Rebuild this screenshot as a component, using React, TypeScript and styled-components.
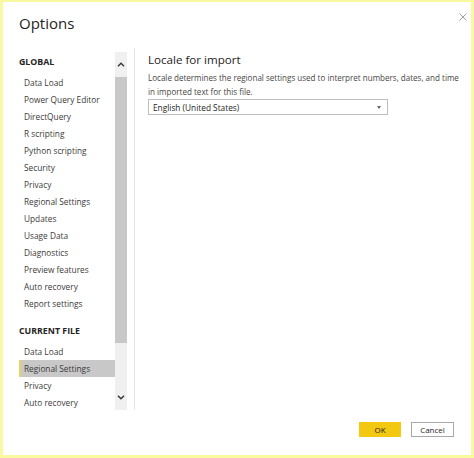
import * as React from "react"
import styled, { createGlobalStyle } from "styled-components"

const FONT = `"Open Sans", "Noto Sans", sans-serif`

const Global = createGlobalStyle`
body {
  margin: 0;
  background: #ffffff;
  font-family: ${FONT};
}
`

const Frame = styled.div`
width: 474px;
height: 458px;
box-sizing: border-box;
border: 3px solid #fbf9a0;
border-top-width: 2px;
background: #ffffff;
display: flex;
flex-direction: column;
`

const Header = styled.div`
height: 46px;
display: flex;
justify-content: space-between;
align-items: flex-start;
padding: 0 3px 0 16px;
box-sizing: border-box;
`

const Title = styled.h1`
margin: 10px 0 0 0;
font-size: 15px;
font-weight: 500;
color: #252423;
line-height: 22px;
`

const Close = styled.div`
margin-top: 3px;
width: 10px;
height: 10px;
`

const Main = styled.div`
height: 362px;
display: flex;
`

const Sidebar = styled.div`
display: flex;
padding: 4px 0 0 16px;
`

const Nav = styled.div`
width: 96px;
display: flex;
flex-direction: column;
`

const Heading = styled.div<{ $top?: number }>`
height: 20px;
line-height: 20px;
margin-top: ${p => p.$top ?? 0}px;
margin-bottom: 2px;
font-size: 8.8px;
font-weight: 700;
color: #252423;
`

const Item = styled.div<{ $active?: boolean }>`
height: 17px;
line-height: 17px;
padding-left: ${p => (p.$active ? 3 : 5)}px;
font-size: 8.3px;
color: #3b3a39;
white-space: nowrap;
background: ${p => (p.$active ? "#c8c8c8" : "transparent")};
border-left: ${p => (p.$active ? "2px solid #e8d35a" : "none")};
`

const Scroll = styled.div`
width: 12px;
height: 358px;
background: #f0f0f0;
display: flex;
flex-direction: column;
`

const Arrow = styled.div`
height: 25px;
display: flex;
align-items: center;
justify-content: center;
`

const Thumb = styled.div`
height: 266px;
background: #c8c8c8;
`

const Separator = styled.div`
width: 1px;
margin-left: 7px;
background: #e6e6e6;
`

const Content = styled.div`
flex: 1;
padding: 3px 0 0 13px;
`

const SectionTitle = styled.div`
font-size: 11.6px;
color: #252423;
line-height: 18px;
`

const Text = styled.div`
margin-top: 2px;
font-size: 8.05px;
white-space: nowrap;
color: #484644;
line-height: 14px;
`

const Select = styled.div`
width: 240px;
height: 16px;
box-sizing: border-box;
border: 1px solid #bdbdbd;
display: flex;
align-items: center;
justify-content: space-between;
padding: 0 6px 0 4px;
font-size: 8.3px;
color: #252423;
`

const Caret = styled.span`
width: 0;
height: 0;
border-left: 2px solid transparent;
border-right: 2px solid transparent;
border-top: 3px solid #666;
`

const Footer = styled.div`
flex: 1;
display: flex;
justify-content: flex-end;
align-items: flex-start;
gap: 10px;
padding: 12px 17px 0 0;
`

const Button = styled.button<{ $primary?: boolean }>`
width: ${p => (p.$primary ? 42 : 43)}px;
height: 15px;
padding: 0;
box-sizing: border-box;
font-family: ${FONT};
font-size: 8px;
color: #252423;
background: ${p => (p.$primary ? "#f2c811" : "#ffffff")};
border: 1px solid ${p => (p.$primary ? "#f2c811" : "#a8a8a8")};
`

const globalItems = [
  "Data Load",
  "Power Query Editor",
  "DirectQuery",
  "R scripting",
  "Python scripting",
  "Security",
  "Privacy",
  "Regional Settings",
  "Updates",
  "Usage Data",
  "Diagnostics",
  "Preview features",
  "Auto recovery",
  "Report settings",
]

const fileItems = ["Data Load", "Regional Settings", "Privacy", "Auto recovery"]

const Chevron: React.FC<{ up?: boolean }> = ({ up }) => (
  <svg width="8" height="5" viewBox="0 0 8 5">
    <path
      d={up ? "M1 4.2 L4 1.2 L7 4.2" : "M1 0.8 L4 3.8 L7 0.8"}
      fill="none"
      stroke="#333"
      strokeWidth="1.4"
    />
  </svg>
)

const App: React.FC<{}> = () => {
  return (
    <>
      <Global />
      <Frame>
        <Header>
          <Title>Options</Title>
          <Close>
            <svg width="10" height="10" viewBox="0 0 10 10">
              <path d="M1.5 1.5 L8.5 8.5 M8.5 1.5 L1.5 8.5" stroke="#a0a0a0" strokeWidth="1" />
            </svg>
          </Close>
        </Header>
        <Main>
          <Sidebar>
            <Nav>
              <Heading>GLOBAL</Heading>
              {globalItems.map(i => (
                <Item key={"g" + i}>{i}</Item>
              ))}
              <Heading $top={9}>CURRENT FILE</Heading>
              {fileItems.map(i => (
                <Item key={"f" + i} $active={i === "Regional Settings"}>
                  {i}
                </Item>
              ))}
            </Nav>
            <Scroll>
              <Arrow>
                <Chevron up />
              </Arrow>
              <Thumb />
              <div style={{ flex: 1 }} />
              <Arrow>
                <Chevron />
              </Arrow>
            </Scroll>
          </Sidebar>
          <Separator />
          <Content>
            <SectionTitle>Locale for import</SectionTitle>
            <Text>
              Locale determines the regional settings used to interpret numbers, dates, and time
              <br />
              in imported text for this file.
            </Text>
            <Select>
              English (United States)
              <Caret />
            </Select>
          </Content>
        </Main>
        <Footer>
          <Button $primary>OK</Button>
          <Button>Cancel</Button>
        </Footer>
      </Frame>
    </>
  )
}

export default App
